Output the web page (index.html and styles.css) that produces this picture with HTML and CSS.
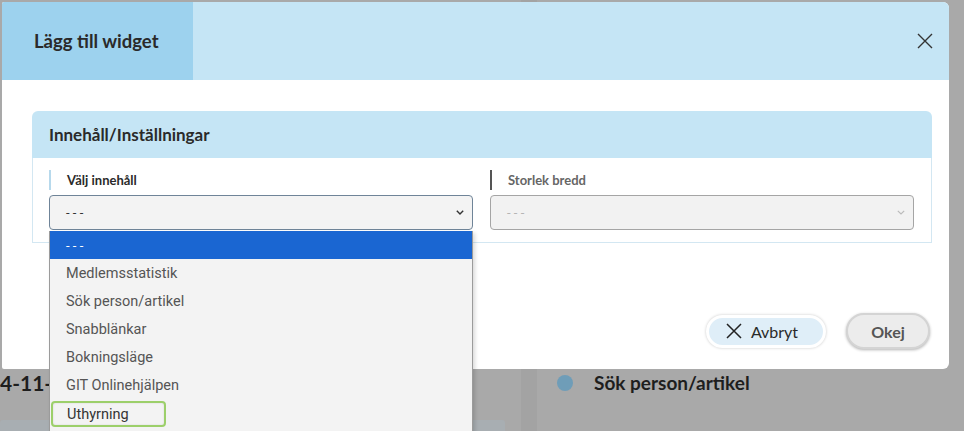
FILE: index.html
```html
<!DOCTYPE html>
<html lang="sv">
<head>
<meta charset="utf-8">
<title>Lägg till widget</title>
<link rel="stylesheet" href="styles.css">
</head>
<body>
<div class="page">
  <div class="page-left">
    <div class="date">4-11-25</div>
    <div class="page-box"></div>
  </div>
  <div class="page-stripe"></div>
  <div class="page-right">
    <div class="widget-title"><span class="dot"></span>Sök person/artikel</div>
  </div>
</div>

<div class="modal">
  <div class="modal-header">
    <div class="modal-title">Lägg till widget</div>
    <div class="modal-header-rest">
      <svg class="close" width="16" height="16" viewBox="0 0 16 16"><path d="M1 1L15 15M15 1L1 15" stroke="#333" stroke-width="1.4" fill="none"/></svg>
    </div>
  </div>
  <div class="modal-body">
    <div class="card">
      <div class="card-header">Innehåll/Inställningar</div>
      <div class="card-body">
        <div class="field">
          <div class="label label-active">Välj innehåll</div>
          <div class="select">
            <span>- - -</span>
            <svg width="8" height="5" viewBox="0 0 8 5"><path d="M0.8 0.8L4 4L7.2 0.8" stroke="#333" stroke-width="1.4" fill="none"/></svg>
          </div>
          <ul class="dropdown">
            <li class="opt selected">- - -</li>
            <li class="opt">Medlemsstatistik</li>
            <li class="opt">Sök person/artikel</li>
            <li class="opt">Snabblänkar</li>
            <li class="opt">Bokningsläge</li>
            <li class="opt">GIT Onlinehjälpen</li>
            <li class="opt"><span class="focus">Uthyrning</span></li>
          </ul>
        </div>
        <div class="field">
          <div class="label label-disabled">Storlek bredd</div>
          <div class="select select-disabled">
            <span>- - -</span>
            <svg width="8" height="5" viewBox="0 0 8 5"><path d="M0.8 0.8L4 4L7.2 0.8" stroke="#bbb" stroke-width="1.2" fill="none"/></svg>
          </div>
        </div>
      </div>
    </div>
    <div class="footer">
      <button class="btn btn-cancel">
        <svg width="16" height="16" viewBox="0 0 16 16"><path d="M1 1L15 15M15 1L1 15" stroke="#222" stroke-width="1.5" fill="none"/></svg>
        Avbryt
      </button>
      <button class="btn btn-ok">Okej</button>
    </div>
  </div>
</div>
</body>
</html>
```

FILE: styles.css
```css
* { box-sizing: border-box; }
html, body { margin: 0; padding: 0; }
body {
  width: 964px;
  height: 431px;
  overflow: hidden;
  background: #a9a9a9;
  font-family: Lato, "Noto Sans", sans-serif;
  position: relative;
  color: #2b2b2b;
}

/* dimmed page behind the modal */
.page {
  display: grid;
  grid-template-columns: 521px 16px 1fr;
  height: 431px;
  padding-top: 368px;
}
.page-left { display: flex; flex-direction: column; }
.date {
  font-weight: 700;
  font-size: 21px;
  color: #1e1e1e;
  margin-top: 3px;
  line-height: 24px;
}
.page-box {
  margin-top: 25px;
  width: 505px;
  height: 20px;
  background: #a8aeb2;
  border-radius: 3px;
}
.page-stripe { background: #a3a3a3; margin-top: -368px; }
.page-right { padding-left: 20px; padding-top: 3px; }
.widget-title {
  display: flex;
  align-items: center;
  gap: 21px;
  font-weight: 700;
  font-size: 19px;
  color: #1e1e1e;
  line-height: 24px;
}
.dot {
  width: 16px;
  height: 16px;
  border-radius: 50%;
  background: #6f9db8;
}

/* modal */
.modal {
  position: absolute;
  left: 2px;
  top: 2px;
  width: 947px;
  height: 367px;
  background: #fff;
  border-radius: 2px 6px 6px 2px;
}
.modal-header {
  display: flex;
  height: 78px;
  border-radius: 2px 6px 0 0;
  overflow: hidden;
}
.modal-title {
  width: 191px;
  background: #9dd2ee;
  font-weight: 700;
  font-size: 18.5px;
  padding-left: 32px;
  display: flex;
  align-items: center;
  color: #2a2a2a;
}
.modal-header-rest {
  flex: 1;
  background: #c5e5f5;
  display: flex;
  align-items: center;
  justify-content: flex-end;
  padding-right: 16px;
}
.modal-body {
  padding: 31px 17px 0 30px;
}
.card { width: 900px; }
.card-header {
  height: 47px;
  background: #c5e5f5;
  border-radius: 6px 6px 0 0;
  padding-left: 17px;
  display: flex;
  align-items: center;
  font-weight: 700;
  font-size: 17px;
  color: #2a2a2a;
}
.card-body {
  border: 1px solid #d3e7f2;
  border-top: 0;
  display: grid;
  grid-template-columns: 424px 424px;
  gap: 17px;
  padding: 12px 0 12px 16px;
}
.field { position: relative; }
.label {
  height: 20px;
  border-left: 2px solid #b7d9ec;
  padding-left: 16px;
  font-size: 13px;
  font-weight: 700;
  display: flex;
  align-items: center;
  margin-bottom: 5px;
  color: #2a2a2a;
}
.label-disabled { border-left-color: #555; color: #666; }
.select {
  height: 35px;
  border: 1px solid #6f8498;
  border-radius: 4px;
  background: #f3f3f3;
  display: flex;
  align-items: center;
  justify-content: space-between;
  padding: 0 8px 0 16px;
  font-family: Roboto, "Noto Sans", sans-serif;
  font-size: 13px;
  color: #333;
}
.select-disabled {
  border-color: #a5a5a5;
  background: #f2f2f2;
  color: #b5b5b5;
}

/* open list of options, lying over the modal */
.dropdown {
  position: absolute;
  left: 0;
  top: 61px;
  width: 424px;
  margin: 0;
  padding: 0;
  list-style: none;
  background: #f3f3f3;
  border: 1px solid #9b9b9b;
  border-top: 0;
  box-shadow: 2px 2px 4px rgba(0,0,0,0.15);
  z-index: 5;
  height: 210px;
  font-family: Roboto, "Noto Sans", sans-serif;
  font-size: 14.5px;
  color: #555;
}
.opt {
  height: 28px;
  display: flex;
  align-items: center;
  padding-left: 16px;
}
.opt.selected { background: #1a66d2; color: #fff; font-size: 13px; }
.focus {
  margin-left: -15px;
  margin-top: 2px;
  padding: 0 13px 0 14px;
  height: 26px;
  width: 115px;
  display: flex;
  align-items: center;
  border: 2px solid #9ccf6a;
  border-radius: 4px;
  color: #333;
  box-shadow: inset 0 0 2px rgba(0,0,0,0.12);
}

.footer {
  display: flex;
  justify-content: flex-end;
  align-items: center;
  gap: 20px;
  padding-right: 2px;
  margin-top: 70px;
}
.btn {
  font-family: Lato, "Noto Sans", sans-serif;
  font-size: 16px;
  display: flex;
  align-items: center;
  justify-content: center;
  border-radius: 18px;
  cursor: pointer;
}
.btn-cancel {
  width: 120px;
  height: 33px;
  gap: 9px;
  background: #dfeef8;
  border: 3px solid #fff;
  box-shadow: 0 0 3px rgba(0,0,0,0.22);
  color: #2a2a2a;
  padding-right: 14px;
}
.btn-ok {
  width: 84px;
  height: 36px;
  background: #ececec;
  border: 2px solid #d4d4d4;
  box-shadow: 0 1px 3px rgba(0,0,0,0.3);
  font-weight: 700;
  color: #555;
}
```
